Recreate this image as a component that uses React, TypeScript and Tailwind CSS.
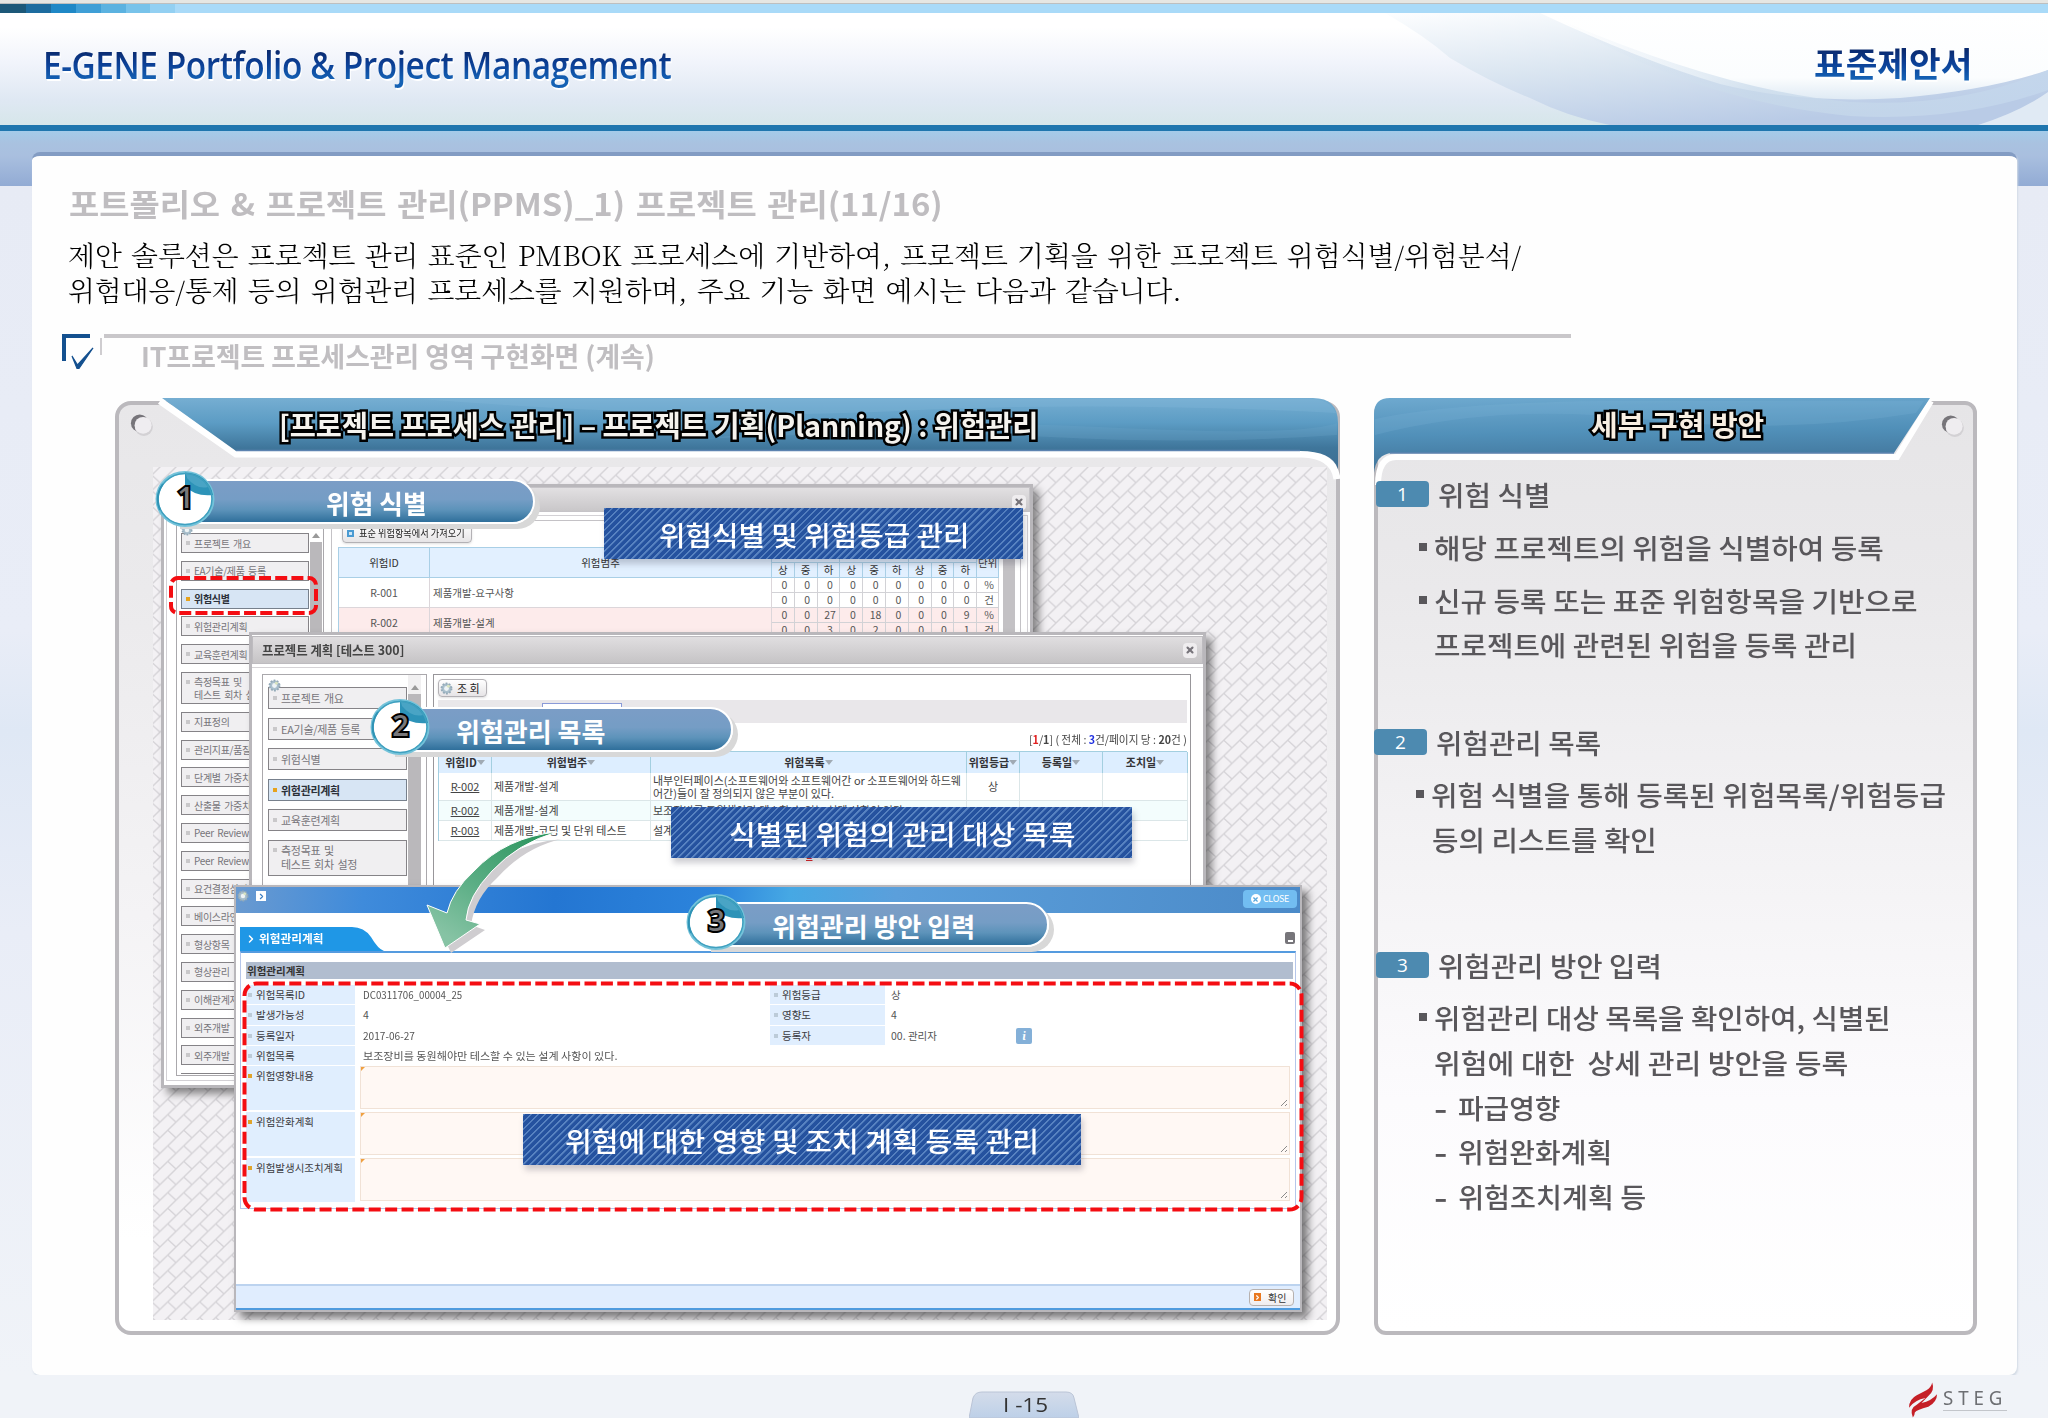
import { useLayoutEffect, useRef, type ReactNode } from 'react';
import { ChevronRight, X } from 'lucide-react';

const sideMenu = [
  { label: '프로젝트 개요' },
  { label: 'EA기술/제품 등록' },
  { label: '위험식별' },
  { label: '위험관리계획' },
  { label: '교육훈련계획' },
  { label: '측정목표 및\n테스트 회차 설정' },
  { label: '지표정의' },
  { label: '관리지표/품질목표' },
  { label: '단계별 가중치' },
  { label: '산출물 가중치' },
  { label: 'Peer Review' },
  { label: 'Peer Review 대상' },
  { label: '요건결정심의' },
  { label: '베이스라인' },
  { label: '형상항목' },
  { label: '형상관리' },
  { label: '이해관계자' },
  { label: '외주개발' },
  { label: '외주개발' },
];

const riskRows = [
  { id: 'R-001', name: '제품개발-요구사항', pct: [0, 0, 0, 0, 0, 0, 0, 0, 0], cnt: [0, 0, 0, 0, 0, 0, 0, 0, 0], tone: 'bg-white' },
  { id: 'R-002', name: '제품개발-설계', pct: [0, 0, 27, 0, 18, 0, 0, 0, 9], cnt: [0, 0, 3, 0, 2, 0, 0, 0, 1], tone: 'bg-[#fdebeb]' },
];

// Stretches a single line of text horizontally so it fills the width of its box.
function Fit({ className = '', ink = '', children }: { className?: string; ink?: string; children: ReactNode }) {
  const box = useRef<HTMLDivElement>(null);
  const line = useRef<HTMLSpanElement>(null);

  useLayoutEffect(() => {
    if (!box.current || !line.current) return;
    const ratio = box.current.clientWidth / line.current.offsetWidth;
    line.current.style.transform = `scaleX(${ratio})`;
  }, []);

  return (
    <div ref={box} className={`shrink-0 whitespace-pre ${className}`}>
      <span ref={line} className={`inline-block origin-left ${ink}`}>{children}</span>
    </div>
  );
}

function Gear({ className = '' }: { className?: string }) {
  return (
    <svg viewBox="0 0 14 14" className={className}>
      <circle cx="7" cy="7" r="5.4" fill="#a9bfcc" stroke="#94aab8" strokeWidth="2" strokeDasharray="2 1.4" />
      <circle cx="7" cy="7" r="2.6" fill="#eef4f6" />
      <circle cx="9" cy="4.5" r="1.6" fill="#d9e4c0" />
    </svg>
  );
}

function CloseBox() {
  return (
    <span className="flex h-[15px] w-[14px] items-center justify-center rounded-sm bg-[#efedef]">
      <X size={10} strokeWidth={5} color="#77747a" />
    </span>
  );
}

function Screw({ className = '' }: { className?: string }) {
  return (
    <svg viewBox="0 0 26 26" className={className}>
      <circle cx="10.5" cy="11" r="9.5" fill="#77757a" />
      <circle cx="15" cy="15" r="9.8" fill="#d3d1d4" />
      <circle cx="14.2" cy="13.4" r="9.2" fill="#efedf0" />
    </svg>
  );
}

function MenuItem({ label, active, large }: { label: string; active?: boolean; large?: boolean }) {
  const tall = label.includes('\n');
  const height = large ? (tall ? 'h-[36px]' : 'h-[22px]') : tall ? 'h-[32px]' : 'h-[20px]';
  return (
    <div
      className={`flex shrink-0 gap-[4px] overflow-hidden border-[1.5px] pl-[4px] whitespace-pre ${height} ${large ? 'text-[11px] leading-[14px]' : 'text-[10px] leading-[13px]'} ${active ? 'border-[#77808c] bg-[#d7e5f4] font-bold text-[#2b3038]' : 'border-[#858387] bg-[#f0eff1] text-[#77757a]'} ${tall ? 'items-start pt-[2px]' : 'items-center'}`}
    >
      <span className={`size-[4px] shrink-0 ${tall ? 'mt-[5px]' : ''} ${active ? 'bg-[#e6a21c]' : 'bg-[#c9c8ca]'}`} />
      <span className="tracking-[-0.3px] [word-spacing:1.5px]">{label}</span>
    </div>
  );
}

function StepPill({ n, place, body, label, textClass }: { n: number; place: string; body: string; label: string; textClass: string }) {
  return (
    <div className={`absolute flex items-center ${place}`}>
      <div className={`mt-[9px] ml-[20px] flex h-[45px] items-center rounded-r-full border-2 border-white bg-[linear-gradient(#7b9dc6_0%,#759dc5_45%,#5d93ba_70%,#2f6f9b_100%)] shadow-[5px_5px_0_#d8d8d8] ${body}`}>
        <Fit className={`mt-[2px] text-[26px] leading-[40px] font-bold text-white ${textClass}`}>{label}</Fit>
      </div>
      <svg viewBox="0 0 60 58" className="absolute top-0 left-0 h-[58px] w-[60px]">
        <ellipse cx="30" cy="29" rx="28" ry="26.5" fill="#fff" stroke="#74c3da" strokeWidth="3" />
        <path d="M30 2.5 A28 26.5 0 0 1 58 25 Q40 27 30 16 Z" fill="#2d93b8" />
        <path d="M31 4 A26 25 0 0 1 53 17 Q42 20 32 8 Z" fill="#61b3d0" opacity="0.55" />
        <ellipse cx="30" cy="29" rx="27" ry="25.5" fill="none" stroke="#3fa0bf" strokeWidth="1.5" />
        <path d="M8 14 A28 26.5 0 0 0 5 40" fill="none" stroke="#2f93b5" strokeWidth="2" />
      </svg>
      <span className="absolute top-[6px] left-[2px] w-[57px] text-center font-['Open_Sans',sans-serif] text-[29px] leading-[42px] font-semibold text-[#77777a] [-webkit-text-stroke:4px_#000] [paint-order:stroke_fill]">
        {n}
      </span>
    </div>
  );
}

function StripeLabel({ place, textClass, children }: { place: string; textClass: string; children: string }) {
  return (
    <div className={`absolute flex h-[51px] items-center justify-center bg-[#25529f] bg-[repeating-linear-gradient(135deg,#5883c1_0_1.2px,#25529f_2px_5px)] shadow-[2px_5px_6px_rgba(60,60,80,0.25)] ${place}`}>
      <Fit className={`mt-[2px] text-[27px] leading-[40px] font-medium text-white ${textClass}`}>{children}</Fit>
    </div>
  );
}

function IdentifyWindow() {
  return (
    <div className="absolute top-[86px] left-[46px] flex h-[604px] w-[872px] flex-col border-[3px] border-[#b9b7bb] bg-white shadow-[6px_6px_8px_rgba(0,0,0,0.45)]">
      <div className="flex h-[25px] items-center justify-end border border-[#c6c4c8] bg-gradient-to-b from-[#e2e0e2] to-[#c9c7c9] pt-[5px] pr-[3px]">
        <CloseBox />
      </div>
      <div className="mx-[2px] mt-[3px] mb-[4px] flex min-h-0 flex-1 gap-[7px] border border-[#d3d1d5] pt-[4px] pr-[6px] pb-[4px] pl-[9px]">
        <div className="flex w-[148px] gap-[1px] border border-[#aaa8ac] pl-[4px]">
          <div className="relative flex w-[128px] flex-col gap-[7.8px] overflow-hidden pt-[12px]">
            {sideMenu.map((item, i) => (
              <MenuItem key={i} label={item.label} active={i === 2} />
            ))}
            <div className="border-t-[1.5px] border-[#858387]" />
            <Gear className="absolute top-[3px] left-0 size-[12px]" />
          </div>
          <div className="flex w-[12px] flex-col items-center gap-[4px] pt-[12px]">
            <span className="border-x-[4px] border-b-[5px] border-x-transparent border-b-[#999]" />
            <span className="w-full flex-1 bg-[#bab8bb]" />
          </div>
        </div>
        <div className="flex min-w-0 flex-1 flex-col border border-[#c4c2c6] pt-[2px] pl-[6px]">
          <div className="ml-[4px] flex h-[20px] w-[130px] items-center gap-[5px] rounded-sm border border-[#b3b1b5] bg-gradient-to-b from-white to-[#e6e4e6] pl-[4px] shadow-sm">
            <span className="size-[7px] border-2 border-[#4b9bd2] bg-[#cfe6f5]" />
            <Fit className="w-[106px] text-[10.5px] leading-[14px] text-[#222]">표준 위험항목에서 가져오기</Fit>
          </div>
          <div className="mt-[4px] flex gap-[4px]">
            <div className="grid w-[661px] grid-cols-[91px_342px_repeat(9,22.8px)_22px] border-t border-l border-[#a9cfe6] text-[10.5px] text-[#555]">
              <div className="row-span-2 flex items-center justify-center border-r border-b border-[#a9cfe6] bg-[#e2f0ff] text-[#333]">위험ID</div>
              <div className="row-span-2 flex items-center justify-center border-r border-b border-[#a9cfe6] bg-[#e2f0ff] text-[#333]">위험범주</div>
              {['발생가능성', '영향정도', '위험등급'].map((h) => (
                <div key={h} className="col-span-3 h-[15px] border-r border-b border-[#a9cfe6] bg-[#e2f0ff] text-center leading-[12px] text-[#333]">{h}</div>
              ))}
              <div className="row-span-2 flex items-center justify-center border-r border-b border-[#a9cfe6] bg-[#e2f0ff] text-[#333]">단위</div>
              {[0, 1, 2].map((g) =>
                ['상', '중', '하'].map((h) => (
                  <div key={`${g}${h}`} className="h-[15px] border-r border-b border-[#a9cfe6] bg-[#e2f0ff] text-center leading-[14px] text-[#333]">{h}</div>
                ))
              )}
              {riskRows.map((row) => (
                <RiskRow key={row.id} {...row} />
              ))}
            </div>
            <div className="mt-[2px] w-[12px] bg-[#c3c1c4]" />
          </div>
        </div>
      </div>
    </div>
  );
}

function RiskRow({ id, name, pct, cnt, tone }: (typeof riskRows)[number]) {
  return (
    <>
      <div className={`row-span-2 flex items-center justify-center border-r border-b border-[#dcd6da] ${tone}`}>{id}</div>
      <div className={`row-span-2 flex items-center border-r border-b border-[#dcd6da] pl-[3px] ${tone}`}>{name}</div>
      {[...pct, '%'].map((v, i) => (
        <div key={`p${i}`} className={`h-[15px] border-r border-b border-[#d2d2d6] pl-[3px] text-center leading-[14px] ${tone}`}>{v}</div>
      ))}
      {[...cnt, '건'].map((v, i) => (
        <div key={`c${i}`} className={`h-[15px] border-r border-b border-[#d2d2d6] pl-[3px] text-center leading-[14px] ${tone}`}>{v}</div>
      ))}
    </>
  );
}

function HeadCell({ label }: { label: string }) {
  return (
    <div className="flex h-[21px] items-center justify-center border-r border-[#a3cfe0] bg-[#ddeeff] font-bold text-[#333336]">
      {label}
      <span className="border-x-[4px] border-t-[5px] border-x-transparent border-t-[#a0aab4]" />
    </div>
  );
}

function ListRow({ cells, tone, height }: { cells: string[]; tone: string; height: string }) {
  return (
    <>
      {cells.map((cell, i) => (
        <div
          key={i}
          className={`flex items-center overflow-hidden border-r border-b border-[#dbe6e8] leading-[13px] whitespace-pre ${height} ${tone} ${i === 0 ? 'justify-center underline' : ''} ${i === 3 ? 'justify-center' : ''} ${i === 1 || i === 2 ? 'pl-[2px]' : ''}`}
        >
          {cell}
        </div>
      ))}
    </>
  );
}

function ListWindow() {
  return (
    <div className="absolute top-[234px] left-[134px] flex h-[300px] w-[957px] flex-col border-[3px] border-[#b9b7bb] bg-white shadow-[6px_6px_8px_rgba(0,0,0,0.45)]">
      <div className="mt-[1px] flex h-[28px] items-center justify-between border border-[#bdbbbf] bg-gradient-to-b from-[#e0dee0] to-[#c6c4c6] pr-[5px] pl-[9px]">
        <Fit className="w-[142px] text-[13px] font-bold text-[#444]">프로젝트 계획 [테스트 300]</Fit>
        <CloseBox />
      </div>
      <div className="mt-[3px] flex min-h-0 flex-1 gap-[6px] border-t border-[#d5d3d6] pt-[6px] pr-[12px] pl-[10px]">
        <div className="flex w-[165px] gap-[1px] border border-[#aaa8ac] pl-[5px]">
          <div className="relative flex w-[139px] flex-col gap-[8.6px] overflow-hidden pt-[12px]">
            {sideMenu.slice(0, 7).map((item, i) => (
              <MenuItem key={i} label={item.label} active={i === 3} large />
            ))}
            <Gear className="absolute top-[4px] left-0 size-[13px]" />
          </div>
          <div className="flex w-[13px] flex-col items-center gap-[4px] bg-[#f1f0f1] pt-[10px]">
            <span className="border-x-[4px] border-b-[5px] border-x-transparent border-b-[#999]" />
            <span className="w-full flex-1 bg-[#bab8bb]" />
          </div>
        </div>
        <div className="min-w-0 flex-1 border border-[#98969a] pt-[4px] pl-[4px] text-[11px] text-[#444]">
          <div className="flex h-[18px] w-[49px] items-center gap-[4px] rounded-sm border border-[#b3b1b5] bg-gradient-to-b from-white to-[#e6e4e6] pl-[1px] shadow-sm">
            <Gear className="size-[13px]" />
            <span className="text-[11px] text-[#222]">조 회</span>
          </div>
          <div className="mt-[3px] flex h-[23px] w-[749px] items-center bg-[#e9e7ea] pl-[12px]">
            <span className="mt-[3px] w-[92px] font-bold">위험목록</span>
            <span className="h-[17px] w-[80px] border border-[#8a9ad8] bg-white" />
          </div>
          <div className="flex h-[28px] w-[749px] items-center justify-end pt-[5px]">
            <Fit className="w-[158px]">
              [<b className="text-[#e02020]">1</b>/<b>1</b>] ( 전체 : <b className="text-[#2030e0]">3</b>건/페이지 당 : <b>20</b>건 )
            </Fit>
          </div>
          <div className="grid w-[749px] grid-cols-[53px_159px_316px_53px_83px_85px] border-t border-l border-[#a3cfe0]">
            {['위험ID', '위험범주', '위험목록', '위험등급', '등록일', '조치일'].map((h) => (
              <HeadCell key={h} label={h} />
            ))}
            <ListRow
              height="h-[28px]"
              tone="bg-white"
              cells={['R-002', '제품개발-설계', '내부인터페이스(소프트웨어와 소프트웨어간 or 소프트웨어와 하드웨\n어간)들이 잘 정의되지 않은 부분이 있다.', '상', '', '']}
            />
            <ListRow height="h-[20px]" tone="bg-[#f3fdfd]" cells={['R-002', '제품개발-설계', '보조장비를 동원해야만 테스할 수 있는 설계 사항이 있다.', '', '', '']} />
            <ListRow height="h-[20px]" tone="bg-white" cells={['R-003', '제품개발-코딩 및 단위 테스트', '설계 변경', '', '', '']} />
          </div>
          <div className="mt-[6px] ml-[334px] flex items-center gap-[6px] leading-[15px]">
            <span className="size-[11px] rounded-full bg-[#d8d6d9]" />
            <span className="size-[11px] rounded-full bg-[#d8d6d9]" />
            <span className="font-bold text-[#e02020] underline">1</span>
            <span className="size-[11px] rounded-full bg-[#d8d6d9]" />
            <span className="size-[11px] rounded-full bg-[#d8d6d9]" />
          </div>
        </div>
      </div>
    </div>
  );
}

function FormLabel({ label, required, className = '' }: { label: string; required?: boolean; className?: string }) {
  return (
    <div className={`flex gap-[4px] bg-[#e0eefe] text-[#3c3c42] ${className}`}>
      <span className={`mt-[8px] size-[4px] shrink-0 ${required ? 'bg-[#e0a42a]' : 'bg-[#bccbd8]'}`} />
      <span className="leading-[20px]">{label}</span>
    </div>
  );
}

function FormWindow() {
  const left = [
    ['위험목록ID', 'DC0311706_00004_25', 'w-[99px]'],
    ['발생가능성', '4', 'w-[6px]'],
    ['등록일자', '2017-06-27', 'w-[52px]'],
    ['위험목록', '보조장비를 동원해야만 테스할 수 있는 설계 사항이 있다.', 'w-[255px]'],
  ];
  const right = [
    ['위험등급', '상'],
    ['영향도', '4'],
    ['등록자', '00. 관리자'],
  ];
  return (
    <div className="absolute top-[487px] left-[119px] flex h-[427px] w-[1068px] flex-col border-[2px] border-[#b9b7bb] bg-white text-[10.5px] shadow-[6px_6px_8px_rgba(0,0,0,0.5)]">
      <div className="flex h-[26px] shrink-0 items-start justify-between bg-[linear-gradient(95deg,#6a9ad0_0%,#3f8bdb_12%,#2476d2_30%,#2c84dc_45%,#46a8e4_52%,#5b9fdb_62%,#4b8ac8_100%)] pt-[3px] pr-[3px] pl-[1px]">
        <div className="flex items-center gap-[7px]">
          <Gear className="size-[12px]" />
          <span className="flex size-[10px] items-center justify-center bg-white">
            <ChevronRight size={9} strokeWidth={3} color="#3b7fc4" />
          </span>
        </div>
        <div className="flex h-[18px] w-[54px] items-center justify-center gap-[2px] rounded-sm bg-[#72bdf1]">
          <span className="flex size-[10px] items-center justify-center rounded-full bg-white">
            <X size={7} strokeWidth={4} color="#5aa7dc" />
          </span>
          <span className="text-[9px] tracking-[-0.3px] text-white">CLOSE</span>
        </div>
      </div>
      <div className="relative mt-[14px] flex h-[24px] shrink-0 items-start justify-between pl-[4px]">
        <svg viewBox="0 0 144 24" className="absolute top-0 left-[4px] h-[24px] w-[144px]">
          <path d="M0 0 H112 Q124 0 131 10 Q138 22 144 24 H0 Z" fill="#1f97e6" />
        </svg>
        <div className="relative flex h-[24px] items-center gap-[2px] pl-[5px] font-bold text-white">
          <ChevronRight size={12} strokeWidth={3} />
          <Fit className="w-[64px] text-[11.5px]">위험관리계획</Fit>
        </div>
        <span className="mt-[5px] mr-[5px] flex h-[12px] w-[10px] items-end justify-center rounded-[2px] bg-[#77757a] pb-[2px]">
          <span className="h-[2px] w-[5px] bg-white" />
        </span>
      </div>
      <div className="mx-[4px] flex h-[258px] shrink-0 flex-col border border-t-2 border-[#b5c6ea] border-t-[#559bdf] px-[5px] pt-[9px]">
        <div className="flex h-[17px] w-[1047px] items-center bg-[#b1bdcf] pl-px font-bold text-[#333]">위험관리계획</div>
        <div className="mt-[6px] flex">
          <div className="grid w-[524px] grid-cols-[109px_1fr] text-[#555]">
            {left.map(([label, value, width]) => (
              <div key={label} className="contents">
                <FormLabel label={label} className="mb-px h-[19.3px] pl-[2px]" />
                <Fit className={`ml-[8px] leading-[20px] ${width}`}>{value}</Fit>
              </div>
            ))}
          </div>
          <div className="grid h-[61px] flex-1 grid-cols-[115px_1fr] text-[#555]">
            {right.map(([label, value], i) => (
              <div key={label} className="contents">
                <FormLabel label={label} className="mb-px h-[19.3px] pl-[4px]" />
                <span className="flex items-center pl-[6px] leading-[20px] whitespace-nowrap">
                  {value}
                  {i === 2 && (
                    <span className="ml-[79px] flex h-[16px] w-[16px] items-center justify-center rounded-[2px] bg-[#84b0d8] font-serif text-[12px] font-bold text-white italic">i</span>
                  )}
                </span>
              </div>
            ))}
          </div>
        </div>
        {['위험영향내용', '위험완화계획', '위험발생시조치계획'].map((label) => (
          <div key={label} className="mb-[2px] flex h-[44px] shrink-0 gap-[5px]">
            <FormLabel label={label} required className="w-[109px] pl-[2px]" />
            <div className="relative h-[43px] w-[932px] border border-[#f1e2d6] bg-[#fff8f4]">
              <svg viewBox="0 0 5 5" className="absolute top-0 left-0 size-[4px]">
                <path d="M0 0 H5 L0 5 Z" fill="#f0a040" />
              </svg>
              <svg viewBox="0 0 8 8" className="absolute right-px bottom-px size-[8px]">
                <path d="M1 7 L7 1 M5 7 L7 5" stroke="#8a8a8a" />
              </svg>
            </div>
          </div>
        ))}
      </div>
      <div className="mt-auto flex h-[26px] items-center justify-end border-t-2 border-b-2 border-t-[#bcd3ef] border-b-[#4f9bde] bg-[#e0edfe] pr-[6px]">
        <div className="flex h-[17px] w-[45px] items-center gap-[7px] rounded-sm border border-[#b7b1ae] bg-gradient-to-b from-white to-[#efedef] pl-[4px]">
          <span className="flex h-[8px] w-[7px] items-center justify-center bg-[#e9781f]">
            <ChevronRight size={7} strokeWidth={4} color="#fff" />
          </span>
          <span className="text-[10px] text-[#333]">확인</span>
        </div>
      </div>
    </div>
  );
}

function ScreenPanel() {
  return (
    <div className="relative h-[937px] w-[1225px] shrink-0">
      <div className="absolute inset-x-0 top-[3px] bottom-0 rounded-[16px] border-4 border-[#bbb9bd] bg-[linear-gradient(#e8e7e9_0%,#ebeaec_20%,#f4f3f5_55%,#fff_90%)]" />
      <svg viewBox="115 399 1225 937" className="absolute inset-0 size-full">
        <defs>
          <pattern id="weave" width="16" height="15.6" patternUnits="userSpaceOnUse">
            <path d="M-1 16.6 L17 -1 M7.5 7.8 L16 15.6 M-1 1 L1 -1 M15 16.6 L17 14.6" stroke="#d6d4d8" strokeWidth="1.4" fill="none" />
          </pattern>
          <linearGradient id="bannerLeft" x1="0" y1="0" x2="0" y2="1">
            <stop offset="0" stopColor="#76aed2" />
            <stop offset="0.35" stopColor="#5c9cc4" />
            <stop offset="0.7" stopColor="#3f769b" />
            <stop offset="1" stopColor="#3e6d92" />
          </linearGradient>
        </defs>
        <rect x="153" y="468" width="1174" height="853" fill="#f3f1f4" />
        <rect x="153" y="468" width="1174" height="853" fill="url(#weave)" />
        <path d="M160 402 L236 455 H1302 Q1334 456 1337 480" fill="none" stroke="#fff" strokeWidth="7" />
        <path d="M162 399 H1313 Q1338 399 1338 424 V470 Q1332 452 1300 452 H236 Z" fill="url(#bannerLeft)" />
        <path d="M420 400 H1310 Q1330 400 1336 414 Q1100 402 900 412 T420 400" fill="#86bbdb" opacity="0.3" />
        <path d="M700 440 Q900 418 1100 428 T1337 424 V436 Q1200 446 1050 438 T700 440" fill="#6fa9cc" opacity="0.25" />
        <path d="M236 451.5 H1300" stroke="#5c83b0" strokeWidth="1.5" />
      </svg>
      <Screw className="absolute top-[15px] left-[15px] size-[24px]" />
      <Fit className="absolute top-[6px] left-[164px] w-[759px] text-[29px] leading-[40px] font-bold text-[#f5f3ee] [-webkit-text-stroke:5px_#000] [paint-order:stroke_fill]">
        [프로젝트 프로세스 관리] – 프로젝트 기획(Planning) : 위험관리
      </Fit>

      <IdentifyWindow />
      <StepPill n={1} place="top-[72px] left-[40px]" body="w-[360px]" label="위험 식별" textClass="ml-[149px] w-[101px]" />
      <StripeLabel place="top-[110px] left-[489px] w-[419px]" textClass="w-[310px]">위험식별 및 위험등급 관리</StripeLabel>
      <svg viewBox="0 0 149 39" className="absolute top-[178px] left-[54px] h-[39px] w-[149px]">
        <rect x="2" y="2" width="145" height="35" rx="7" fill="none" stroke="#f40d12" strokeWidth="4" strokeDasharray="12 4.2" />
      </svg>

      <ListWindow />
      <StepPill n={2} place="top-[300px] left-[255px]" body="w-[343px]" label="위험관리 목록" textClass="ml-[64px] w-[149px]" />
      <StripeLabel place="top-[409px] left-[556px] w-[461px]" textClass="w-[346px]">식별된 위험의 관리 대상 목록</StripeLabel>

      <FormWindow />
      <StepPill n={3} place="top-[495px] left-[571px]" body="w-[343px]" label="위험관리 방안 입력" textClass="ml-[64px] w-[203px]" />
      <svg viewBox="0 0 1062 231" className="absolute top-[583px] left-[127px] h-[231px] w-[1062px]">
        <rect x="2.5" y="2.5" width="1057" height="226" rx="12" fill="none" stroke="#f40d12" strokeWidth="4" strokeDasharray="12 4.4" />
      </svg>
      <StripeLabel place="top-[716px] left-[408px] w-[558px]" textClass="w-[474px]">위험에 대한 영향 및 조치 계획 등록 관리</StripeLabel>

      <svg viewBox="420 825 160 135" className="absolute top-[426px] left-[305px] h-[135px] w-[160px]">
        <defs>
          <linearGradient id="arrowFill" x1="1" y1="0" x2="0.3" y2="1">
            <stop offset="0" stopColor="#27935a" />
            <stop offset="0.6" stopColor="#5bae85" />
            <stop offset="1" stopColor="#86c3a4" />
          </linearGradient>
        </defs>
        <g>
          <path transform="translate(5 6)" d="M557 834 Q506 838 474 873 Q452 892 447 914 L427 906 L446 948 L480 925 L466 920 Q470 893 492 873 Q520 842 557 834 Z" fill="#cfcdd0" />
          <path d="M557 833 Q506 838 474 872 Q452 892 447 914 L427 906 L445 949 L480 925 L466 921 Q468 897 492 872 Q518 844 557 833 Z" fill="url(#arrowFill)" stroke="#fff" strokeWidth="1" />
        </g>
      </svg>
    </div>
  );
}

function StepHeading({ n, className, children }: { n: number; className: string; children: ReactNode }) {
  return (
    <div className={`flex h-[40px] items-center ${className}`}>
      <span className="flex h-[26px] w-[53px] items-center justify-center rounded bg-[#4d8ab0] font-['Open_Sans',sans-serif] text-[19px] text-white">{n}</span>
      {children}
    </div>
  );
}

function Dash() {
  return <span className="mr-[1px] inline-block origin-left scale-x-[1.3] font-bold">-</span>;
}

function DetailPanel() {
  return (
    <div className="relative h-[937px] w-[603px] shrink-0">
      <div className="absolute inset-x-0 top-[3px] bottom-0 rounded-[12px] border-4 border-[#bbb9bd] bg-[linear-gradient(#e6e5e7_0%,#eae9eb_20%,#f4f3f5_50%,#fcfbfd_75%,#fff_100%)]" />
      <svg viewBox="1374 399 603 937" className="absolute inset-0 size-full">
        <defs>
          <linearGradient id="bannerRight" x1="0" y1="0" x2="0.12" y2="1">
            <stop offset="0" stopColor="#6ea9cf" />
            <stop offset="0.5" stopColor="#5190b9" />
            <stop offset="1" stopColor="#3f7196" />
          </linearGradient>
        </defs>
        <path d="M1378 486 Q1378 458 1396 458 H1897 L1931 402" fill="none" stroke="#fff" strokeWidth="6" />
        <path d="M1390 399 H1930 L1894 454 H1392 Q1376 455 1374 474 V415 Q1374 399 1390 399 Z" fill="url(#bannerRight)" />
        <path d="M1375 436 Q1500 404 1640 420 T1916 414 L1924 402 H1600 Q1450 404 1375 420 Z" fill="#84b9da" opacity="0.2" />
        <path d="M1390 454 H1894" stroke="#5c83b0" strokeWidth="1.5" />
      </svg>
      <Screw className="absolute top-[16px] left-[567px] size-[24px]" />
      <div className="relative flex flex-col text-[27px] leading-[40px] font-medium text-[#59575b]">
        <Fit className="mt-[6px] ml-[217px] w-[173px] text-[28px] font-bold text-[#f8efe2] [-webkit-text-stroke:5px_#000] [paint-order:stroke_fill]">세부 구현 방안</Fit>

        <StepHeading n={1} className="mt-[30px] ml-[2px]">
          <Fit className="mt-px ml-[9px] w-[112px]">위험 식별</Fit>
        </StepHeading>
        <div className="mt-[14px] ml-[45px] flex items-center gap-[6px]">
          <span className="mb-[2px] size-[8px] bg-[#59575b]" />
          <Fit className="ml-px w-[450px]">해당 프로젝트의 위험을 식별하여 등록</Fit>
        </div>
        <div className="mt-[13px] ml-[45px] flex items-center gap-[6px]">
          <span className="mb-[2px] size-[8px] bg-[#59575b]" />
          <Fit className="ml-px w-[484px]">신규 등록 또는 표준 위험항목을 기반으로</Fit>
        </div>
        <Fit className="mt-[4px] ml-[60px] w-[423px]">프로젝트에 관련된 위험을 등록 관리</Fit>

        <StepHeading n={2} className="mt-[57px]">
          <Fit className="mt-px ml-[9px] w-[165px]">위험관리 목록</Fit>
        </StepHeading>
        <div className="mt-[13px] ml-[42px] flex items-center gap-[6px]">
          <span className="mb-[2px] size-[8px] bg-[#59575b]" />
          <Fit className="ml-px w-[515px]">위험 식별을 통해 등록된 위험목록/위험등급</Fit>
        </div>
        <Fit className="mt-[5px] ml-[58px] w-[225px]">등의 리스트를 확인</Fit>

        <StepHeading n={3} className="mt-[85px] ml-[2px]">
          <Fit className="mt-px ml-[9px] w-[224px]">위험관리 방안 입력</Fit>
        </StepHeading>
        <div className="mt-[13px] ml-[45px] flex items-center gap-[6px]">
          <span className="mb-[2px] size-[8px] bg-[#59575b]" />
          <Fit className="ml-px w-[457px]">위험관리 대상 목록을 확인하여, 식별된</Fit>
        </div>
        <Fit className="mt-[5px] ml-[60px] w-[414px]">위험에 대한  상세 관리 방안을 등록</Fit>
        <Fit className="mt-[5px] ml-[60px] w-[127px]"><Dash />  파급영향</Fit>
        <Fit className="mt-[4px] ml-[60px] w-[178px]"><Dash />  위험완화계획</Fit>
        <Fit className="mt-[5px] ml-[60px] w-[212px]"><Dash />  위험조치계획 등</Fit>
      </div>
    </div>
  );
}

function SlideHeader() {
  return (
    <header className="relative flex h-[131px] shrink-0 flex-col overflow-hidden border-b-[6px] border-[#1f76ae] bg-[linear-gradient(#fff_0%,#fff_22%,#f1f4fb_50%,#dfe8f3_80%,#d6e6ea_100%)]">
      <svg viewBox="0 0 2048 131" className="absolute inset-0 h-[131px] w-[2048px]">
        <defs>
          <linearGradient id="swoosh" x1="0" y1="0" x2="0.5" y2="1">
            <stop offset="0" stopColor="#fdfeff" />
            <stop offset="0.5" stopColor="#dbe6f1" />
            <stop offset="1" stopColor="#b9cbe6" />
          </linearGradient>
          <linearGradient id="swooshTop" x1="0" y1="0" x2="0" y2="1">
            <stop offset="0" stopColor="#fff" />
            <stop offset="0.75" stopColor="#fbfdfe" />
            <stop offset="1" stopColor="#dfeaf4" />
          </linearGradient>
          <linearGradient id="ribbon" x1="0" y1="0" x2="1" y2="0">
            <stop offset="0" stopColor="#dfe9f4" stopOpacity="0" />
            <stop offset="0.4" stopColor="#c7d9ea" stopOpacity="0.7" />
            <stop offset="1" stopColor="#c3d6ec" stopOpacity="0.9" />
          </linearGradient>
        </defs>
        <path d="M1385 13 Q1425 36 1450 58 Q1490 82 1530 98 Q1570 118 1615 126 H2048 V13 Z" fill="url(#swoosh)" />
        <path d="M1540 13 Q1640 60 1720 84 Q1800 104 1900 98 Q1990 90 2048 70 V13 Z" fill="url(#swooshTop)" />
        <path d="M1560 20 Q1690 100 1850 116 Q1960 122 2048 90 V70 Q1960 108 1850 102 Q1730 92 1560 20 Z" fill="url(#ribbon)" />
        <path d="M1975 126 Q2020 112 2048 92 V126 Z" fill="#eaf1f8" opacity="0.8" />
      </svg>
      <div className="h-[3px] shrink-0 bg-[#e6e6e2]" />
      <div className="relative flex h-[10px] shrink-0 border-t border-[#bdbfbf] bg-[#a9daf8]">
        <span className="w-[26px] bg-[#1c5878]" />
        <span className="w-[25px] bg-[#1d6c9f]" />
        <span className="w-[25px] bg-[#1f88c6]" />
        <span className="w-[25px] bg-[#3f9fd6]" />
        <span className="w-[25px] bg-[#5bb2e0]" />
        <span className="w-[24px] bg-[#78c3ea]" />
        <span className="w-[25px] bg-[#93d0f2]" />
      </div>
      <div className="relative flex items-center justify-between pt-[25px] pr-[76px] pl-[43px] leading-[52px] drop-shadow-[1px_2px_0_#fff]">
        <Fit
          className="w-[628px] font-['Open_Sans','Noto_Sans_CJK_KR',sans-serif] text-[38px] font-semibold"
          ink="bg-[linear-gradient(#0a2a6e_25%,#0b3f96_50%,#1461b4_80%)] bg-clip-text text-transparent tracking-[-0.5px]"
        >
          E-GENE Portfolio & Project Management
        </Fit>
        <Fit
          className="-mt-[2px] w-[158px] text-[34px] font-bold"
          ink="bg-[linear-gradient(#0a2a6e_25%,#0b3f96_50%,#1461b4_80%)] bg-clip-text text-transparent"
        >
          표준제안서
        </Fit>
      </div>
    </header>
  );
}

function SlideFooter() {
  return (
    <footer className="relative flex h-[43px] shrink-0 items-end justify-center bg-[#f0f3f8]">
      <div className="relative flex h-[27px] w-[110px] items-center justify-center">
        <svg viewBox="0 0 110 27" className="absolute inset-0 size-full">
          <defs>
            <linearGradient id="tabFill" x1="0" y1="0" x2="0" y2="1">
              <stop offset="0" stopColor="#d4dcea" />
              <stop offset="1" stopColor="#bdd0e8" />
            </linearGradient>
          </defs>
          <path d="M0 27 L4 7 Q6 1 13 1 H97 Q104 1 105 7 L110 27 Z" fill="url(#tabFill)" stroke="#bac4d6" />
        </svg>
        <Fit className="relative ml-[2px] w-[45px] font-['Open_Sans',sans-serif] text-[20px] leading-[24px] font-medium text-[#333]">I -15</Fit>
      </div>
      <div className="absolute top-[6px] right-[41px] flex items-start gap-[5px]">
        <svg viewBox="0 0 30 37" className="h-[37px] w-[29px]">
          <path d="M24 1 Q27 9 20 15 L13 22 Q23 20 29 13 Q29 21 20 26 Q8 29 6 32 Q6 35 4 37 Q0 28 8 24 L17 17 Q6 19 0 27 Q0 18 8 14 L18 9 Q23 6 24 1 Z" fill="#c51f27" />
        </svg>
        <div className="mt-[7px] border-b border-[#c3c6cb] pb-[2px]">
          <Fit className="w-[64px] font-['Noto_Sans',sans-serif] text-[19px] leading-[20px] tracking-[5px] text-[#6d6f73]">STEG</Fit>
        </div>
      </div>
    </footer>
  );
}

export default function App() {
  return (
    <div className="flex h-[1418px] w-[2048px] flex-col overflow-hidden bg-[#e9edf6] font-['Noto_Sans_CJK_KR',sans-serif]">
      <SlideHeader />
      <div className="h-[1244px] shrink-0 bg-[linear-gradient(#a4cbe9_0px,#a9c2e0_12px,#a9bfdf_25px,#92abd4_55px,#e7ebf5_55px,#e9edf7_500px,#dfe8f5_600px,#e9edf7_800px,#f0f3f8_1244px)] pt-[21px] pr-[31px] pl-[32px]">
        <main className="flex h-[1223px] flex-col rounded-[8px] border-t-4 border-[#839cc3] bg-[#fefefe] shadow-[1px_2px_2px_#d3dbe5]">
          <Fit className="mt-[27px] ml-[37px] w-[874px] text-[31px] leading-[40px] font-bold [word-spacing:3px] text-[#bfbdc0]">
            포트폴리오 & 프로젝트 관리(PPMS)_1) 프로젝트 관리(11/16)
          </Fit>
          <div className="mt-[14px] ml-[36px] font-['Noto_Serif_CJK_KR','Liberation_Serif','Noto_Sans_CJK_KR',serif] text-[27px] leading-[35px] font-light [word-spacing:2px] text-black">
            <Fit className="w-[1453px]">제안 솔루션은 프로젝트 관리 표준인 PMBOK 프로세스에 기반하여, 프로젝트 기획을 위한 프로젝트 위험식별/위험분석/</Fit>
            <Fit className="w-[1113px]">위험대응/통제 등의 위험관리 프로세스를 지원하며, 주요 기능 화면 예시는 다음과 같습니다.</Fit>
          </div>
          <div className="mt-[27px] ml-[30px] flex h-[64px] shrink-0">
            <svg viewBox="0 0 42 36" className="h-[36px] w-[42px]">
              <path d="M2 27 V2 H28" fill="none" stroke="#14508f" strokeWidth="4" />
              <path d="M39 4 V21" stroke="#cfcdd0" strokeWidth="2" />
              <path d="M10 22 L15.5 31 L31 14 L17 34.5 H15 Z" fill="#14508f" stroke="#14508f" strokeWidth="1.2" />
            </svg>
            <div className="w-[1467px] border-t-[4px] border-[#c9c7ca] pl-[37px]">
              <Fit className="w-[514px] text-[27px] leading-[36px] font-bold text-[#c0bec1]">IT프로젝트 프로세스관리 영역 구현화면 (계속)</Fit>
            </div>
          </div>
          <div className="flex gap-[34px] pl-[83px]">
            <ScreenPanel />
            <DetailPanel />
          </div>
        </main>
      </div>
      <SlideFooter />
    </div>
  );
}
